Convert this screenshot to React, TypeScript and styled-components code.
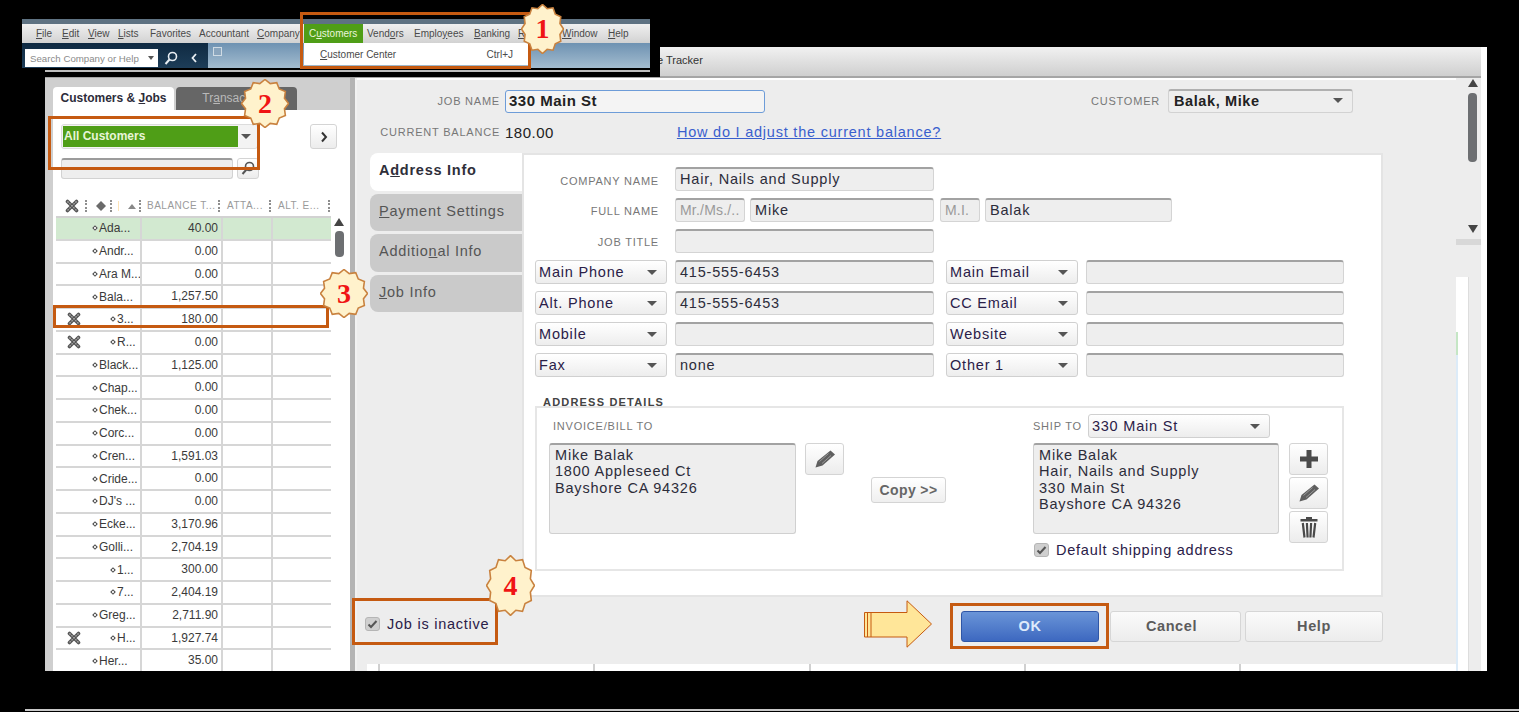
import React from "react";
import styled, { createGlobalStyle } from "styled-components";

const GlobalStyle = createGlobalStyle`
  html, body { margin: 0; padding: 0; background: #000; }
  * { box-sizing: border-box; }
`;

const sans = `"Liberation Sans", Arial, sans-serif`;

const Page = styled.div`
  position: relative;
  width: 1519px;
  height: 712px;
  overflow: hidden;
  background: #000;
  padding: 47px 32px 0 45px;
  font-family: ${sans};
  color: #2c2c3a;
`;

const Window = styled.div`
  width: 1442px;
  height: 624px;
  background: #ededed;
  border-right: 6px solid #fff;
  display: flex;
  flex-direction: column;
  overflow: hidden;
`;

const BottomLine = styled.div`
  height: 2px;
  margin: 38px -32px 0 -20px;
  background: #c9c9c9;
`;

const TitleStrip = styled.div`
  height: 31px;
  flex: none;
  display: flex;
  align-items: center;
  padding: 0 0 4px 582px;
  font-size: 11px;
  color: #333;
  background: linear-gradient(#f1f1f1, #cfcfcf);
  border-bottom: 2px solid #a5a5a5;
`;

const WindowBody = styled.div`
  flex: 1;
  min-height: 0;
  display: flex;
`;

/* left customer list */
const SidePane = styled.div`
  width: 305px;
  flex: none;
  padding: 9px 0 0 8px;
  background: #cfcfcf;
  display: flex;
  flex-direction: column;
`;

const SideTabs = styled.div`
  display: flex;
  gap: 2px;
  height: 23px;
  flex: none;
`;

const SideTab = styled.div<{ $active?: boolean }>`
  width: 121px;
  border-radius: 4px 4px 0 0;
  text-align: center;
  line-height: 23px;
  font-size: 12px;
  font-weight: ${({ $active }) => ($active ? 700 : 400)};
  background: ${({ $active }) => ($active ? "#fff" : "#666")};
  color: ${({ $active }) => ($active ? "#2c2c3a" : "#b9b9b9")};
`;

const SideCard = styled.div`
  flex: 1;
  min-height: 0;
  background: #fff;
  padding: 14px 0 0 8px;
  overflow: hidden;
`;

const FilterRow = styled.div`
  display: flex;
  align-items: center;
  height: 25px;
`;

const FilterSelect = styled.div`
  width: 197px;
  height: 25px;
  padding: 1px;
  display: flex;
  align-items: center;
  background: #f3f3f3;
  border: 1px solid #dcdcdc;
  border-radius: 3px;
`;

const FilterValue = styled.div`
  width: 175px;
  height: 21px;
  padding-left: 1px;
  line-height: 21px;
  font-size: 12px;
  font-weight: 700;
  color: #e8f5d8;
  background: #4f9e17;
`;

const Caret = styled.span<{ $mr?: number; $small?: boolean }>`
  flex: none;
  width: 0;
  height: 0;
  border-left: ${({ $small }) => ($small ? 3 : 5)}px solid transparent;
  border-right: ${({ $small }) => ($small ? 3 : 5)}px solid transparent;
  border-top: ${({ $small }) => ($small ? 4 : 5)}px solid #555;
  margin-left: auto;
  margin-right: ${({ $mr }) => $mr ?? 9}px;
`;

const SquareButton = styled.div<{ $w: number; $h: number; $ml?: number }>`
  width: ${({ $w }) => $w}px;
  height: ${({ $h }) => $h}px;
  margin-left: ${({ $ml }) => $ml ?? 0}px;
  flex: none;
  display: flex;
  align-items: center;
  justify-content: center;
  color: #444;
  background: linear-gradient(#fff, #ececec);
  border: 1px solid #d4d4d4;
  border-radius: 3px;
`;

const SearchRow = styled.div`
  display: flex;
  margin-top: 9px;
  gap: 4px;
`;

const SearchBox = styled.div`
  width: 172px;
  height: 21px;
  background: #eee;
  border: 1px solid #d2d2d2;
  border-top: 2px solid #9b9b9b;
  border-radius: 3px;
`;

const HeaderRow = styled.div`
  display: flex;
  align-items: center;
  height: 18px;
  margin: 18px 0 1px -5px;
  font-size: 10px;
  letter-spacing: 0.5px;
  color: #9a9a9a;
  white-space: nowrap;
`;

const HeadCell = styled.div<{ $w: number; $pl?: number }>`
  width: ${({ $w }) => $w}px;
  padding-left: ${({ $pl }) => $pl ?? 0}px;
  flex: none;
  height: 12px;
  line-height: 12px;
  display: flex;
  align-items: center;
  border-right: 2px dotted #8e8e8e;
`;

const SortTick = styled.span`
  width: 1px;
  height: 10px;
  margin-right: 9px;
  background: #fde4b8;
`;

const SortUp = styled.span`
  width: 0;
  height: 0;
  border-left: 4px solid transparent;
  border-right: 4px solid transparent;
  border-bottom: 5px solid #888;
`;

const ListArea = styled.div`
  display: flex;
  margin-left: -5px;
`;

const Rows = styled.div`
  width: 275px;
  flex: none;
  border-top: 2px solid #d2d2d2;
`;

const Row = styled.div<{ $selected?: boolean }>`
  display: grid;
  grid-template-columns: 86px 81px 50px 58px;
  height: 22.75px;
  font-size: 12px;
  line-height: 20px;
  color: #3a3a3a;
  background: ${({ $selected }) => ($selected ? "#d2e9d0" : "#fff")};
  border-bottom: 2px solid #d6d6d6;
`;

const NameCell = styled.div<{ $child?: boolean }>`
  display: flex;
  align-items: center;
  padding-left: ${({ $child }) => ($child ? 55 : 37)}px;
  position: relative;
  border-right: 2px solid #d6d6d6;
  white-space: nowrap;
  overflow: hidden;
`;

const Dot = styled.span`
  flex: none;
  width: 4px;
  height: 4px;
  margin-right: 2px;
  transform: rotate(45deg);
  border: 1px solid #444;
  background: #fff;
`;

const MarkSlot = styled.span`
  position: absolute;
  left: 11px;
  top: 3px;
  display: flex;
`;

const AmountCell = styled.div`
  text-align: right;
  padding-right: 3px;
  border-right: 2px solid #d6d6d6;
`;

const BlankCell = styled.div<{ $last?: boolean }>`
  border-right: ${({ $last }) => ($last ? "none" : "2px solid #d6d6d6")};
`;

const ListScroll = styled.div`
  width: 14px;
  margin-left: 1px;
  display: flex;
  flex-direction: column;
  align-items: center;
  padding-top: 2px;
`;

const ArrowUp = styled.span`
  width: 0;
  height: 0;
  border-left: 5px solid transparent;
  border-right: 5px solid transparent;
  border-bottom: 8px solid #444;
`;

const ArrowDown = styled.span`
  width: 0;
  height: 0;
  border-left: 5px solid transparent;
  border-right: 5px solid transparent;
  border-top: 8px solid #444;
`;

const ListThumb = styled.div`
  width: 9px;
  height: 26px;
  margin-top: 5px;
  border-radius: 4px;
  background: #6d6f72;
`;

const Splitter = styled.div`
  width: 7px;
  flex: none;
  background: #f2f2f2;
  border-left: 5px solid #b4b4b4;
  display: flex;
`;

/* job dialog */
const MainColumn = styled.div`
  width: 1099px;
  flex: none;
  display: flex;
  flex-direction: column;
`;

const Dialog = styled.div`
  height: 586px;
  flex: none;
  background: #ededed;
  border-top: 2px solid #fff;
  padding: 9px 73px 0 13px;
  display: flex;
  flex-direction: column;
`;

const HeadRow = styled.div<{ $mt?: number }>`
  display: flex;
  align-items: center;
  height: 24px;
  margin-top: ${({ $mt }) => $mt ?? 0}px;
`;

const FieldCaption = styled.div<{ $w?: number; $mt?: number }>`
  width: ${({ $w }) => ($w ? `${$w}px` : "auto")};
  margin-top: ${({ $mt }) => $mt ?? 0}px;
  flex: none;
  text-align: right;
  font-size: 11px;
  letter-spacing: 0.78px;
  color: #777;
  white-space: nowrap;
`;

const JobInput = styled.div`
  width: 260px;
  height: 23px;
  margin-left: 5px;
  padding-left: 3px;
  line-height: 20px;
  font-size: 15px;
  font-weight: 700;
  letter-spacing: 0.5px;
  color: #222;
  background: #f4f4f4;
  border: 1px solid #6d9cd8;
  border-radius: 3px;
`;

const CustomerSelect = styled.div`
  width: 185px;
  height: 24px;
  margin-left: 8px;
  padding: 0 0 2px 5px;
  display: flex;
  align-items: center;
  font-size: 14.5px;
  font-weight: 700;
  letter-spacing: 0.6px;
  color: #222;
  background: #eee;
  border: 1px solid #d2d2d2;
  border-top: 2px solid #b0b0b0;
  border-radius: 3px;
`;

const BalanceValue = styled.div`
  margin-left: 5px;
  font-size: 15px;
  letter-spacing: 0.5px;
  color: #222;
`;

const HelpLink = styled.a`
  margin-left: 123px;
  font-size: 14.5px;
  letter-spacing: 0.78px;
  color: #3a5fcd;
  text-decoration: underline;
`;

const TabsAndPane = styled.div`
  display: flex;
  height: 444px;
  margin-top: 9px;
  flex: none;
`;

const TabColumn = styled.div`
  width: 152px;
  flex: none;
  display: flex;
  flex-direction: column;
  gap: 3px;
`;

const TabItem = styled.div<{ $active?: boolean }>`
  height: 37.5px;
  padding: 0 0 3px 9px;
  display: flex;
  align-items: center;
  font-size: 14.5px;
  letter-spacing: 0.75px;
  font-weight: ${({ $active }) => ($active ? 700 : 400)};
  color: ${({ $active }) => ($active ? "#2f2f3a" : "#555")};
  background: ${({ $active }) => ($active ? "#fff" : "#cacaca")};
  border-radius: 8px 0 0 8px;
`;

const Pane = styled.div`
  flex: 1;
  background: #fff;
  border: 2px solid #e4e4e4;
  padding: 12px 0 0 11px;
`;

const FormRows = styled.div`
  display: flex;
  flex-direction: column;
  gap: 7px;
`;

const FormRow = styled.div`
  display: flex;
  align-items: center;
  height: 24px;
`;

const TextField = styled.div<{ $w: number; $ml?: number; $ghost?: boolean }>`
  width: ${({ $w }) => $w}px;
  height: 24px;
  margin-left: ${({ $ml }) => $ml ?? 0}px;
  flex: none;
  padding-left: 4px;
  line-height: 21px;
  font-size: ${({ $ghost }) => ($ghost ? 14 : 14.5)}px;
  letter-spacing: ${({ $ghost }) => ($ghost ? 0.2 : 0.8)}px;
  white-space: nowrap;
  overflow: hidden;
  color: ${({ $ghost }) => ($ghost ? "#9a9a9a" : "#2c2c3a")};
  background: #eee;
  border: 1px solid #d4d4d4;
  border-top: 2px solid #a2a2a2;
  border-radius: 3px;
`;

const DropDown = styled.div<{ $w: number; $ml?: number }>`
  width: ${({ $w }) => $w}px;
  height: 24px;
  margin-left: ${({ $ml }) => $ml ?? 0}px;
  flex: none;
  padding-left: 3px;
  display: flex;
  align-items: center;
  font-size: 14.5px;
  letter-spacing: 0.8px;
  color: #2a2048;
  background: linear-gradient(#fff, #ededed);
  border: 1px solid #d0d0d0;
  border-radius: 3px;
`;

const AddressTitle = styled.div`
  margin: 21px 0 0 8px;
  height: 9px;
  line-height: 9px;
  font-size: 11px;
  font-weight: 700;
  letter-spacing: 1.2px;
  color: #444;
`;

const AddressBox = styled.div`
  width: 809px;
  height: 165px;
  margin-top: -1px;
  padding: 6px 0 0 12px;
  border: 2px solid #e6e6e6;
  display: flex;
  align-items: flex-start;
`;

const AddressColumn = styled.div<{ $w: number; $ml?: number }>`
  width: ${({ $w }) => $w}px;
  margin-left: ${({ $ml }) => $ml ?? 0}px;
  flex: none;
`;

const AddressHead = styled.div`
  display: flex;
  align-items: center;
  height: 24px;
  margin-bottom: 5px;
`;

const SmallCaption = styled.div<{ $pl?: number }>`
  padding-left: ${({ $pl }) => $pl ?? 0}px;
  font-size: 11px;
  letter-spacing: 0.78px;
  color: #777;
  white-space: nowrap;
`;

const AddressText = styled.div`
  height: 91px;
  padding: 2px 0 0 5px;
  font-size: 14.5px;
  line-height: 16.4px;
  letter-spacing: 0.8px;
  white-space: pre-line;
  background: #eee;
  border: 1px solid #d0d0d0;
  border-top: 2px solid #a2a2a2;
  border-radius: 3px;
`;

const PencilButton = styled(SquareButton)`
  margin-top: 29px;
`;

const CopyButton = styled.div`
  width: 75px;
  height: 26px;
  margin: 63px 0 0 27px;
  flex: none;
  display: flex;
  align-items: center;
  justify-content: center;
  font-size: 14px;
  font-weight: 700;
  letter-spacing: 0.4px;
  color: #666;
  background: linear-gradient(#fff, #efefef);
  border: 1px solid #d4d4d4;
  border-radius: 3px;
`;

const ActionStack = styled.div`
  margin: 29px 0 0 10px;
  display: flex;
  flex-direction: column;
  gap: 2px;
`;

const CheckRow = styled.div<{ $mt?: number; $ml?: number }>`
  display: flex;
  align-items: center;
  gap: 7px;
  margin-top: ${({ $mt }) => $mt ?? 0}px;
  margin-left: ${({ $ml }) => $ml ?? 0}px;
  font-size: 14.5px;
  letter-spacing: 0.75px;
  color: #2a2048;
  white-space: nowrap;
`;

const CheckMark = styled.span`
  width: 15px;
  height: 14px;
  flex: none;
  display: flex;
  align-items: center;
  justify-content: center;
  background: #cfcfcf;
  border: 1px solid #b5b5b5;
  border-radius: 3px;
`;

const Footer = styled.div`
  flex: 1;
  display: flex;
  align-items: flex-start;
  justify-content: space-between;
  margin-left: -5px;
`;

const FooterButtons = styled.div`
  display: flex;
  margin-top: 14px;
`;

const FooterButton = styled.div<{ $w: number; $ml?: number; $pr?: number; $primary?: boolean }>`
  width: ${({ $w }) => $w}px;
  height: 31px;
  margin-left: ${({ $ml }) => $ml ?? 0}px;
  padding: 0 ${({ $pr }) => $pr ?? 0}px 2px 0;
  display: flex;
  align-items: center;
  justify-content: center;
  font-size: 14.5px;
  font-weight: 700;
  letter-spacing: 0.6px;
  border-radius: 3px;
  color: ${({ $primary }) => ($primary ? "#dfeafb" : "#5c5c5c")};
  background: ${({ $primary }) =>
    $primary
      ? "linear-gradient(#6a95d8, #3d68c0)"
      : "linear-gradient(#fbfbfb, #ececec)"};
  border: 1px solid ${({ $primary }) => ($primary ? "#2f56a6" : "#d6d6d6")};
`;

const UnderGrid = styled.div`
  flex: 1;
  display: flex;
  background: #fff;
  border-left: 10px solid #ededed;
`;

const UnderCell = styled.div<{ $w: number }>`
  width: ${({ $w }) => $w}px;
  flex: none;
  border-right: 2px solid #d0d0d0;
`;

/* strip down the right edge */
const RightEdge = styled.div`
  flex: 1;
  display: flex;
  flex-direction: column;
`;

const EdgeScroller = styled.div`
  height: 161px;
  flex: none;
  padding: 1px 0 6px 12px;
  display: flex;
  flex-direction: column;
  align-items: flex-start;
  background: #ededed;
`;

const EdgeThumb = styled.div`
  width: 9px;
  height: 69px;
  margin: 6px 0 auto 0;
  border-radius: 4px;
  background: #6d6f72;
`;

const EdgeBand = styled.div`
  height: 6px;
  flex: none;
  background: #d8d8d8;
`;

const EdgeGap = styled.div`
  height: 32px;
  flex: none;
  background: #ededed;
`;

const EdgeLower = styled.div`
  flex: 1;
  display: flex;
  background: #ededed;
`;

const EdgeWhite = styled.div`
  width: 13px;
  padding-top: 55px;
  background: #fff;
  border-right: 1px solid #ddd;
  display: flex;
  flex-direction: column;
`;

const EdgeGreen = styled.div`
  width: 2px;
  height: 23px;
  flex: none;
  background: #c5e6c5;
`;

const EdgeBlue = styled.div`
  width: 2px;
  flex: 1;
  background: #dcebf8;
`;

/* the menu picture pasted over the window */
const MenuShot = styled.div`
  position: absolute;
  left: 0;
  top: 0;
  width: 660px;
  height: 77px;
  background: #000;
  padding: 19px 0 0 22px;
`;

const MenuFrame = styled.div`
  position: relative;
  width: 628px;
  height: 49px;
  border-top: 5px solid #5e7282;
`;

const MenuUnderline = styled.div`
  width: 605px;
  height: 2px;
  margin: 2px 0 0 23px;
  background: #bdbdbd;
`;

const MenuBar = styled.div`
  height: 19px;
  padding-left: 14px;
  display: flex;
  align-items: center;
  font-size: 10px;
  color: #4a4a4a;
  white-space: nowrap;
  background: linear-gradient(#f0f0f0, #d2d2d2);
`;

const MenuName = styled.span<{ $w: number; $open?: boolean }>`
  width: ${({ $w }) => $w}px;
  flex: none;
  height: 19px;
  line-height: 19px;
  padding-left: ${({ $open }) => ($open ? 5 : 0)}px;
  margin-right: ${({ $open }) => ($open ? 4 : 0)}px;
  color: ${({ $open }) => ($open ? "#e9f5dc" : "#4a4a4a")};
  background: ${({ $open }) => ($open ? "#4f9e17" : "transparent")};
`;

const ToolRow = styled.div`
  height: 25px;
  display: flex;
  align-items: flex-start;
  background: linear-gradient(#0f2a42, #1d3d58);
`;

const CompanySearch = styled.div`
  width: 133px;
  height: 18px;
  margin: 6px 0 0 3px;
  padding: 0 4px 0 5px;
  display: flex;
  align-items: center;
  font-size: 9.7px;
  color: #8a8a8a;
  white-space: nowrap;
  background: #fff;
`;

const ToolIcon = styled.span<{ $w: number }>`
  width: ${({ $w }) => $w}px;
  height: 18px;
  margin-top: 6px;
  flex: none;
  display: flex;
  align-items: center;
  justify-content: center;
  color: #e8eef3;
`;

const ToolFill = styled.div`
  flex: 1;
  align-self: stretch;
  margin-left: 4px;
  padding: 4px 0 0 5px;
  background: linear-gradient(#6e92b2, #a3bccf);
`;

const TinyBox = styled.div`
  width: 9px;
  height: 9px;
  border: 1px solid #cfdbe4;
  background: #8aa5bd;
`;

const MenuDrop = styled.div`
  position: absolute;
  left: 282px;
  top: 19px;
  width: 224px;
  height: 22px;
  padding: 0 15px 0 16px;
  display: flex;
  align-items: center;
  justify-content: space-between;
  font-size: 10px;
  color: #4a4a4a;
  background: #fff;
`;

/* annotations */
const Highlight = styled.div<{ $x: number; $y: number; $w: number; $h: number }>`
  position: absolute;
  left: ${({ $x }) => $x}px;
  top: ${({ $y }) => $y}px;
  width: ${({ $w }) => $w}px;
  height: ${({ $h }) => $h}px;
  border: 3px solid #c55a11;
`;

const Badge = styled.div<{ $x: number; $y: number; $w: number; $h: number }>`
  position: absolute;
  left: ${({ $x }) => $x}px;
  top: ${({ $y }) => $y}px;
  width: ${({ $w }) => $w}px;
  height: ${({ $h }) => $h}px;
  display: flex;
  align-items: center;
  justify-content: center;
  font-family: "Liberation Serif", "Times New Roman", serif;
  font-size: 28px;
  font-weight: 700;
  color: #f01414;
  svg {
    position: absolute;
    inset: 0;
    width: 100%;
    height: 100%;
  }
  span {
    position: relative;
  }
`;

const PointerArrow = styled.svg`
  position: absolute;
  left: 864px;
  top: 600px;
`;

const starPoints = Array.from({ length: 24 }, (_, i) => {
  const angle = (Math.PI * i) / 12 - Math.PI / 2;
  const radius = i % 2 === 0 ? 49 : 42;
  return `${50 + radius * Math.cos(angle)},${50 + radius * Math.sin(angle)}`;
}).join(" ");

const CallOut = ({
  n,
  x,
  y,
  w,
  h,
}: {
  n: number;
  x: number;
  y: number;
  w: number;
  h: number;
}) => (
  <Badge $x={x} $y={y} $w={w} $h={h}>
    <svg viewBox="0 0 100 100" preserveAspectRatio="none">
      <polygon
        points={starPoints}
        fill="#fff2cc"
        stroke="#c9823f"
        strokeWidth="1.6"
        vectorEffect="non-scaling-stroke"
      />
    </svg>
    <span>{n}</span>
  </Badge>
);

const CrossMark = ({ size = 14 }: { size?: number }) => (
  <svg width={size} height={size} viewBox="0 0 14 14">
    <path d="M2.5 2.5 L11.5 11.5 M11.5 2.5 L2.5 11.5" stroke="#555" strokeWidth="3.6" strokeLinecap="round" />
    <path d="M2.5 2.5 L11.5 11.5 M11.5 2.5 L2.5 11.5" stroke="#c8c8c8" strokeWidth="1.1" strokeDasharray="1.4 1.4" />
  </svg>
);

const Pencil = () => (
  <svg width="22" height="20" viewBox="0 0 22 20">
    <path d="M16.5 1.5 L21 5.5 L8.5 16.5 L1.5 18.5 L3.5 12 Z" fill="#5f5f5f" />
    <path d="M14.5 4.5 L5.5 12.5 M17 6.5 L8 14.5" stroke="#a8a8a8" strokeWidth="0.8" />
  </svg>
);

const Plus = () => (
  <svg width="20" height="20" viewBox="0 0 20 20">
    <path d="M7.5 1 H12.5 V7.5 H19 V12.5 H12.5 V19 H7.5 V12.5 H1 V7.5 H7.5 Z" fill="#4a4a4a" />
  </svg>
);

const Trash = () => (
  <svg width="18" height="21" viewBox="0 0 18 21">
    <rect x="6" y="0" width="6" height="2" fill="#4a4a4a" />
    <rect x="0.5" y="2" width="17" height="2.5" fill="#4a4a4a" />
    <path d="M2.8 6 L4.5 20.5 M6.9 6 L7.6 20.5 M11.1 6 L10.4 20.5 M15.2 6 L13.5 20.5" stroke="#4a4a4a" strokeWidth="2.2" />
  </svg>
);

const Magnifier = ({ color = "#555" }: { color?: string }) => (
  <svg width="14" height="15" viewBox="0 0 14 15">
    <circle cx="8.5" cy="5.5" r="4" fill="none" stroke={color} strokeWidth="1.6" />
    <path d="M5.5 8.5 L1.5 13" stroke={color} strokeWidth="2" />
  </svg>
);

const Tick = () => (
  <svg width="11" height="10" viewBox="0 0 11 10">
    <path d="M1.5 5.5 L4 8 L9.5 2" fill="none" stroke="#555" strokeWidth="2" />
  </svg>
);

const Diamond = () => (
  <svg width="12" height="12" viewBox="0 0 12 12">
    <path d="M6 1 L11 6 L6 11 L1 6 Z" fill="#6a6a6a" />
  </svg>
);

interface CustomerRow {
  name: string;
  balance: string;
  child?: boolean;
  inactive?: boolean;
}

const customers: CustomerRow[] = [
  { name: "Ada...", balance: "40.00" },
  { name: "Andr...", balance: "0.00" },
  { name: "Ara M...", balance: "0.00" },
  { name: "Bala...", balance: "1,257.50" },
  { name: "3...", balance: "180.00", child: true, inactive: true },
  { name: "R...", balance: "0.00", child: true, inactive: true },
  { name: "Black...", balance: "1,125.00" },
  { name: "Chap...", balance: "0.00" },
  { name: "Chek...", balance: "0.00" },
  { name: "Corc...", balance: "0.00" },
  { name: "Cren...", balance: "1,591.03" },
  { name: "Cride...", balance: "0.00" },
  { name: "DJ's ...", balance: "0.00" },
  { name: "Ecke...", balance: "3,170.96" },
  { name: "Golli...", balance: "2,704.19" },
  { name: "1...", balance: "300.00", child: true },
  { name: "7...", balance: "2,404.19", child: true },
  { name: "Greg...", balance: "2,711.90" },
  { name: "H...", balance: "1,927.74", child: true, inactive: true },
  { name: "Her...", balance: "35.00" },
];

const contactRows = [
  ["Main Phone", "415-555-6453", "Main Email"],
  ["Alt. Phone", "415-555-6453", "CC Email"],
  ["Mobile", "", "Website"],
  ["Fax", "none", "Other 1"],
];

const menus: [React.ReactNode, number, boolean?][] = [
  [<><u>F</u>ile</>, 26],
  [<><u>E</u>dit</>, 26],
  [<><u>V</u>iew</>, 30],
  [<><u>L</u>ists</>, 32],
  [<>Favorites</>, 49],
  [<>Accountant</>, 58],
  [<><u>C</u>ompany</>, 47],
  [<>C<u>u</u>stomers</>, 59, true],
  [<>Vend<u>o</u>rs</>, 47],
  [<>Emplo<u>y</u>ees</>, 60],
  [<><u>B</u>anking</>, 44],
  [<><u>R</u>eports</>, 44],
  [<><u>W</u>indow</>, 46],
  [<><u>H</u>elp</>, 30],
];

export default function App() {
  return (
    <Page>
      <GlobalStyle />
      <Window>
        <TitleStrip>Income Tracker</TitleStrip>
        <WindowBody>
          <SidePane>
            <SideTabs>
              <SideTab $active>Customers &amp; <u>J</u>obs</SideTab>
              <SideTab>Tr<u>a</u>nsactions</SideTab>
            </SideTabs>
            <SideCard>
              <FilterRow>
                <FilterSelect>
                  <FilterValue>All Customers</FilterValue>
                  <Caret $mr={5} />
                </FilterSelect>
                <SquareButton $w={27} $h={25} $ml={52}>
                  <svg width="8" height="12" viewBox="0 0 8 12">
                    <path d="M2 1.5 L6 6 L2 10.5" fill="none" stroke="#333" strokeWidth="2" />
                  </svg>
                </SquareButton>
              </FilterRow>
              <SearchRow>
                <SearchBox />
                <SquareButton $w={22} $h={21}>
                  <Magnifier />
                </SquareButton>
              </SearchRow>
              <HeaderRow>
                <HeadCell $w={31} $pl={9}>
                  <CrossMark />
                </HeadCell>
                <HeadCell $w={25} $pl={8}>
                  <Diamond />
                </HeadCell>
                <HeadCell $w={29} $pl={6}>
                  <SortTick />
                  <SortUp />
                </HeadCell>
                <HeadCell $w={79} $pl={6}>BALANCE T...</HeadCell>
                <HeadCell $w={51} $pl={7}>ATTA...</HeadCell>
                <HeadCell $w={59} $pl={7}>ALT. E...</HeadCell>
              </HeaderRow>
              <ListArea>
                <Rows>
                  {customers.map((c, i) => (
                    <Row key={i} $selected={i === 0}>
                      <NameCell $child={c.child}>
                        {c.inactive && (
                          <MarkSlot>
                            <CrossMark />
                          </MarkSlot>
                        )}
                        <Dot />
                        {c.name}
                      </NameCell>
                      <AmountCell>{c.balance}</AmountCell>
                      <BlankCell />
                      <BlankCell $last />
                    </Row>
                  ))}
                </Rows>
                <ListScroll>
                  <ArrowUp />
                  <ListThumb />
                </ListScroll>
              </ListArea>
            </SideCard>
          </SidePane>
          <Splitter />
          <MainColumn>
            <Dialog>
              <HeadRow>
                <FieldCaption $w={130}>JOB NAME</FieldCaption>
                <JobInput>330 Main St</JobInput>
                <FieldCaption $w={395}>CUSTOMER</FieldCaption>
                <CustomerSelect>
                  Balak, Mike
                  <Caret />
                </CustomerSelect>
              </HeadRow>
              <HeadRow $mt={7}>
                <FieldCaption $w={130}>CURRENT BALANCE</FieldCaption>
                <BalanceValue>180.00</BalanceValue>
                <HelpLink>How do I adjust the current balance?</HelpLink>
              </HeadRow>
              <TabsAndPane>
                <TabColumn>
                  <TabItem $active><span>A<u>d</u>dress Info</span></TabItem>
                  <TabItem><span><u>P</u>ayment Settings</span></TabItem>
                  <TabItem><span>Additio<u>n</u>al Info</span></TabItem>
                  <TabItem><span><u>J</u>ob Info</span></TabItem>
                </TabColumn>
                <Pane>
                  <FormRows>
                    <FormRow>
                      <FieldCaption $w={124} $mt={3}>COMPANY NAME</FieldCaption>
                      <TextField $w={259} $ml={16}>Hair, Nails and Supply</TextField>
                    </FormRow>
                    <FormRow>
                      <FieldCaption $w={124} $mt={2}>FULL NAME</FieldCaption>
                      <TextField $w={70} $ml={16} $ghost>Mr./Ms./..</TextField>
                      <TextField $w={184} $ml={5}>Mike</TextField>
                      <TextField $w={40} $ml={6} $ghost>M.I.</TextField>
                      <TextField $w={187} $ml={5}>Balak</TextField>
                    </FormRow>
                    <FormRow>
                      <FieldCaption $w={124} $mt={2}>JOB TITLE</FieldCaption>
                      <TextField $w={259} $ml={16} />
                    </FormRow>
                    {contactRows.map(([kind, value, other]) => (
                      <FormRow key={kind}>
                        <DropDown $w={132}>
                          {kind}
                          <Caret />
                        </DropDown>
                        <TextField $w={259} $ml={8}>{value}</TextField>
                        <DropDown $w={132} $ml={12}>
                          {other}
                          <Caret />
                        </DropDown>
                        <TextField $w={258} $ml={8} />
                      </FormRow>
                    ))}
                  </FormRows>
                  <AddressTitle>ADDRESS DETAILS</AddressTitle>
                  <AddressBox>
                    <AddressColumn $w={247}>
                      <AddressHead>
                        <SmallCaption $pl={4}>INVOICE/BILL TO</SmallCaption>
                      </AddressHead>
                      <AddressText>{"Mike Balak\n1800 Appleseed Ct\nBayshore CA 94326"}</AddressText>
                    </AddressColumn>
                    <PencilButton $w={39} $h={32} $ml={9}>
                      <Pencil />
                    </PencilButton>
                    <CopyButton>Copy &gt;&gt;</CopyButton>
                    <AddressColumn $w={246} $ml={87}>
                      <AddressHead>
                        <SmallCaption>SHIP TO</SmallCaption>
                        <DropDown $w={182} $ml={6}>
                          330 Main St
                          <Caret />
                        </DropDown>
                      </AddressHead>
                      <AddressText>{"Mike Balak\nHair, Nails and Supply\n330 Main St\nBayshore CA  94326"}</AddressText>
                      <CheckRow $mt={8} $ml={1}>
                        <CheckMark><Tick /></CheckMark>
                        Default shipping address
                      </CheckRow>
                    </AddressColumn>
                    <ActionStack>
                      <SquareButton $w={39} $h={32}><Plus /></SquareButton>
                      <SquareButton $w={39} $h={32}><Pencil /></SquareButton>
                      <SquareButton $w={39} $h={32}><Trash /></SquareButton>
                    </ActionStack>
                  </AddressBox>
                </Pane>
              </TabsAndPane>
              <Footer>
                <CheckRow $mt={19}>
                  <CheckMark><Tick /></CheckMark>
                  Job is inactive
                </CheckRow>
                <FooterButtons>
                  <FooterButton $w={138} $primary>OK</FooterButton>
                  <FooterButton $w={131} $ml={11} $pr={8}>Cancel</FooterButton>
                  <FooterButton $w={138} $ml={4}>Help</FooterButton>
                </FooterButtons>
              </Footer>
            </Dialog>
            <UnderGrid>
              <UnderCell $w={13} />
              <UnderCell $w={215} />
              <UnderCell $w={216} />
              <UnderCell $w={215} />
              <UnderCell $w={215} />
            </UnderGrid>
          </MainColumn>
          <RightEdge>
            <EdgeScroller>
              <ArrowUp />
              <EdgeThumb />
              <ArrowDown />
            </EdgeScroller>
            <EdgeBand />
            <EdgeGap />
            <EdgeLower>
              <EdgeWhite>
                <EdgeGreen />
                <EdgeBlue />
              </EdgeWhite>
            </EdgeLower>
          </RightEdge>
        </WindowBody>
      </Window>
      <BottomLine />

      <MenuShot>
        <MenuFrame>
          <MenuBar>
            {menus.map(([label, w, open], i) => (
              <MenuName key={i} $w={w} $open={open}>{label}</MenuName>
            ))}
          </MenuBar>
          <ToolRow>
            <CompanySearch>
              Search Company or Help
              <Caret $small $mr={0} />
            </CompanySearch>
            <ToolIcon $w={26}><Magnifier color="#e8eef3" /></ToolIcon>
            <ToolIcon $w={20}>
              <svg width="6" height="10" viewBox="0 0 6 10">
                <path d="M5 1 L1.5 5 L5 9" fill="none" stroke="#e8eef3" strokeWidth="1.8" />
              </svg>
            </ToolIcon>
            <ToolFill><TinyBox /></ToolFill>
          </ToolRow>
          <MenuDrop>
            <span><u>C</u>ustomer Center</span>
            <span>Ctrl+J</span>
          </MenuDrop>
        </MenuFrame>
        <MenuUnderline />
      </MenuShot>

      <Highlight $x={300} $y={12} $w={231} $h={57} />
      <Highlight $x={48} $y={116} $w={212} $h={54} />
      <Highlight $x={53} $y={305} $w={276} $h={23} />
      <Highlight $x={352} $y={598} $w={146} $h={47} />
      <Highlight $x={950} $y={603} $w={159} $h={46} />

      <CallOut n={1} x={521} y={4} w={43} h={50} />
      <CallOut n={2} x={241} y={79} w={48} h={49} />
      <CallOut n={3} x={320} y={269} w={48} h={49} />
      <CallOut n={4} x={486} y={555} w={49} h={61} />

      <PointerArrow width="68" height="48" viewBox="0 0 68 48">
        <path
          d="M0.5 12.5 H43 V0.8 L67.5 24 L43 47.2 V37 H0.5 Z"
          fill="#ffe699"
          stroke="#c55a11"
        />
        <path d="M3.5 12.5 V37 M7 12.5 V37" stroke="#c55a11" />
      </PointerArrow>
    </Page>
  );
}
